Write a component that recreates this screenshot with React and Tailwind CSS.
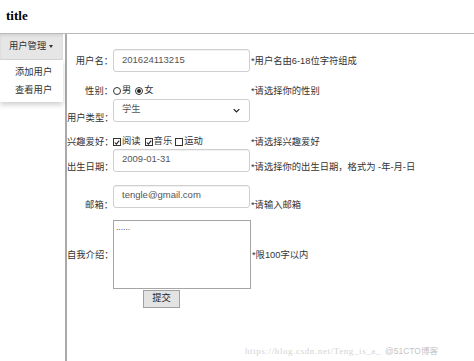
import React from 'react';

const FONT = "font-['Liberation_Sans','Noto_Sans_CJK_SC',sans-serif]";

const Radio = ({ checked }) => (
  <span className="inline-flex w-[8px] h-[8px] rounded-full border border-[#333] items-center justify-center mr-[1px]">
    {checked && <span className="w-[4px] h-[4px] rounded-full bg-[#222]" />}
  </span>
);

const Check = ({ checked }) => (
  <span className="inline-flex w-[8px] h-[8px] border border-[#333] items-center justify-center mr-[1px] bg-white">
    {checked && (
      <svg viewBox="0 0 8 8" className="w-[7px] h-[7px]">
        <path d="M1 4 L3.2 6.2 L7 1.5" fill="none" stroke="#222" strokeWidth="1.4" />
      </svg>
    )}
  </span>
);

const Label = ({ children, className = '' }) => (
  <div className={`w-[46px] shrink-0 text-right whitespace-nowrap leading-[12px] ${className}`}>{children}</div>
);

const Hint = ({ children, className = '' }) => (
  <div className={`pl-[1px] whitespace-nowrap leading-[12px] ${className}`}>{children}</div>
);

const Field = ({ children }) => (
  <div className="w-[137px] h-[23px] border border-[#cfcfcf] rounded-[3px] bg-white flex items-center pl-[8px] text-[#555] text-[9.5px] shadow-[inset_0_1px_1px_rgba(0,0,0,0.06)]">
    {children}
  </div>
);

export default function App() {
  return (
    <div className={`w-[474px] h-[361px] bg-white overflow-hidden relative text-[9.3px] text-[#333] ${FONT}`}>
      {/* header */}
      <div className="h-[34px] border-b border-[#b9b9b9] flex items-center pl-[6px]">
        <h1 className="font-['Liberation_Serif',serif] font-bold text-[13px] text-black -mt-[1px]">title</h1>
      </div>

      <div className="flex h-[327px]">
        {/* sidebar */}
        <aside className="w-[67px] shrink-0 border-r-2 border-[#a9a9a9]">
          <div className="w-[63px] h-[26px] bg-[#e6e6e6] border-b border-[#d6d6d6] flex items-center pl-[9px] shadow-[inset_0_2px_3px_rgba(0,0,0,0.08)]">
            <span>用户管理</span>
            <span className="ml-[3px] w-0 h-0 border-l-[2.5px] border-r-[2.5px] border-t-[3px] border-l-transparent border-r-transparent border-t-[#333]" />
          </div>
          <div className="w-[63px] h-[42px] bg-white shadow-[0_3px_5px_rgba(0,0,0,0.18)] flex flex-col pt-[6px] pl-[15px] gap-[6px]">
            <span className="leading-[12px]">添加用户</span>
            <span className="leading-[12px]">查看用户</span>
          </div>
        </aside>

        {/* form */}
        <main className="flex-1 flex flex-col pt-[15px]">
          <div className="flex items-center h-[23px]">
            <Label>用户名：</Label>
            <Field>201624113215</Field>
            <Hint>*用户名由6-18位字符组成</Hint>
          </div>

          <div className="flex items-center h-[14px] mt-[12px]">
            <Label>性别：</Label>
            <div className="w-[137px] flex items-center">
              <Radio />男<span className="w-[4px]" /><Radio checked />女
            </div>
            <Hint>*请选择你的性别</Hint>
          </div>

          <div className="flex items-end h-[23px] mt-[1px]">
            <Label className="-mb-[2px]">用户类型：</Label>
            <div className="w-[137px] h-[23px] border border-[#cfcfcf] rounded-[3px] bg-white flex items-center justify-between pl-[8px] pr-[9px] text-[#555]">
              <span className="-mt-[2px]">学生</span>
              <svg viewBox="0 0 10 6" className="w-[7px] h-[5px]">
                <path d="M1 1 L5 5 L9 1" fill="none" stroke="#222" strokeWidth="1.8" />
              </svg>
            </div>
          </div>

          <div className="flex items-center h-[14px] mt-[13px]">
            <Label>兴趣爱好：</Label>
            <div className="w-[137px] flex items-center">
              <Check checked />阅读<span className="w-[4px]" /><Check checked />音乐<span className="w-[3px]" /><Check />运动
            </div>
            <Hint>*请选择兴趣爱好</Hint>
          </div>

          <div className="flex items-end h-[23px]">
            <Label className="-mb-[1px]">出生日期：</Label>
            <Field><span className="-mt-[3px]">2009-01-31</span></Field>
            <Hint className="-mb-[1px]">*请选择你的出生日期，格式为 -年-月-日</Hint>
          </div>

          <div className="flex items-end h-[23px] mt-[13px]">
            <Label className="-mb-[3px]">邮箱：</Label>
            <Field><span className="-mt-[2px]">tengle@gmail.com</span></Field>
            <Hint className="-mb-[3px]">*请输入邮箱</Hint>
          </div>

          <div className="flex items-center h-[69px] mt-[12px]">
            <Label>自我介绍：</Label>
            <div className="w-[138px] h-[69px] border border-[#a5a5a5] bg-white text-[#555] pl-[2px] leading-[10px] pt-[1px] text-[8.5px]">......</div>
            <Hint>*限100字以内</Hint>
          </div>

          <div className="pl-[76px] mt-[1px]">
            <button className="w-[37px] h-[18px] bg-[#e3e3e3] border border-[#a0a0a0] text-[#222] flex items-center justify-center leading-none">提交</button>
          </div>
        </main>
      </div>

      {/* watermark */}
      <div className="absolute left-[245px] top-[345px] flex items-center whitespace-nowrap">
        <span className="font-['Liberation_Serif',serif] text-[9px] text-[#d4d4d4] tracking-[0.6px]">https://blog.csdn.net/Teng_is_a_</span>
        <span className="ml-[4px] text-[8.5px] text-[#c4c4c4]">@51CTO博客</span>
      </div>
    </div>
  );
}
